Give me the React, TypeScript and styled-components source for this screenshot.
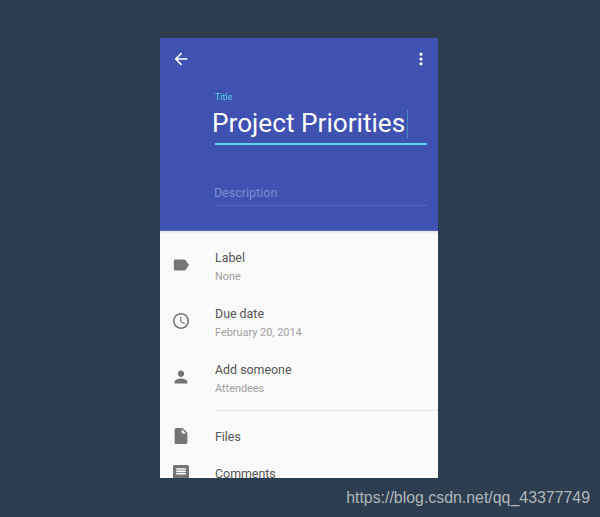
import React from "react";
import styled, { createGlobalStyle } from "styled-components";

const GlobalStyle = createGlobalStyle`
  html, body {
    margin: 0;
    padding: 0;
    background: #2d3e50;
  }
  body {
    font-family: Roboto, "Liberation Sans", sans-serif;
  }
`;

const Page = styled.div`
  width: 600px;
  height: 517px;
  padding-top: 38px;
  box-sizing: border-box;
  overflow: hidden;
  background: #2d3e50;
`;

const Screen = styled.div`
  width: 278px;
  height: 440px;
  margin-left: 160px;
  overflow: hidden;
  background: #fafafa;
`;

const Header = styled.header`
  height: 193px;
  box-sizing: border-box;
  background: #3f51b1;
  border-bottom: 1px solid #5c6bc0;
  box-shadow: 0 1px 2px rgba(0, 0, 0, 0.12);
`;

const Toolbar = styled.div`
  display: flex;
  justify-content: space-between;
  align-items: center;
  padding: 9px 5px 0 9px;
  height: 24px;
`;

const Form = styled.div`
  display: flex;
  flex-direction: column;
  padding: 21px 11px 0 54px;
`;

const TitleLabel = styled.label`
  font-size: 9px;
  line-height: 11px;
  margin-left: 1px;
  color: #4dd0e1;
`;

const TitleRow = styled.div`
  display: flex;
  align-items: center;
  height: 33px;
  margin-top: 4px;
  margin-left: -2px;
`;

const TitleText = styled.span`
  font-size: 26.2px;
  line-height: 33px;
  color: #fff;
  white-space: nowrap;
`;

const Caret = styled.span`
  width: 1px;
  height: 28px;
  margin-left: 2px;
  background: #3f8cc0;
`;

const TitleLine = styled.div`
  height: 2px;
  margin-top: 3px;
  margin-left: 1px;
  background: #5ed5e6;
`;

const Description = styled.div`
  margin-top: 40px;
  font-size: 12.5px;
  line-height: 16px;
  color: #7f8cd0;
  padding-bottom: 4px;
  border-bottom: 1px solid #5565bd;
`;

const List = styled.div`
  padding-top: 6px;
`;

const Row = styled.div<{ $tall?: boolean }>`
  display: flex;
  align-items: center;
  height: ${(p) => (p.$tall ? 56 : 40)}px;
`;

const LastRow = styled(Row)`
  height: 34px;
  align-items: flex-start;
  padding-top: 5px;
`;

const IconSlot = styled.div`
  width: 55px;
  display: flex;
  padding-left: 9px;
  box-sizing: border-box;
  flex-shrink: 0;
`;

const Texts = styled.div`
  display: flex;
  flex-direction: column;
  gap: 4px;
  padding-top: 3px;
`;

const Primary = styled.span`
  font-size: 12.4px;
  line-height: 16px;
  color: #555;
`;

const Secondary = styled.span`
  font-size: 10.9px;
  line-height: 13px;
  color: #a0a0a0;
`;

const FileName = styled(Primary)`
  padding-top: 2px;
`;

const CommentName = styled(Primary)`
  padding-top: 5px;
`;

const Divider = styled.div`
  height: 1px;
  margin: 5px 0 5px 55px;
  background: #e6e6e6;
`;

const Watermark = styled.div`
  margin-top: 11px;
  padding-right: 10px;
  text-align: right;
  font-family: "Liberation Sans", Arial, sans-serif;
  font-size: 15.9px;
  line-height: 18px;
  color: #b0b6bc;
`;

const Icon = styled.svg`
  width: 24px;
  height: 24px;
  fill: #757575;
  display: block;
`;

const WhiteIcon = styled(Icon)`
  fill: #fff;
`;

const scaled = "translate(2.4 2.4) scale(0.8)";

export default function App() {
  return (
    <Page>
      <GlobalStyle />
      <Screen>
        <Header>
          <Toolbar>
            <WhiteIcon viewBox="0 0 24 24">
              <path d="M20 11H7.83l5.59-5.59L12 4l-8 8 8 8 1.41-1.41L7.83 13H20v-2z" transform={scaled} />
            </WhiteIcon>
            <WhiteIcon viewBox="0 0 24 24">
              <path d="M12 8c1.1 0 2-.9 2-2s-.9-2-2-2-2 .9-2 2 .9 2 2 2zm0 2c-1.1 0-2 .9-2 2s.9 2 2 2 2-.9 2-2-.9-2-2-2zm0 6c-1.1 0-2 .9-2 2s.9 2 2 2 2-.9 2-2-.9-2-2-2z" transform={scaled} />
            </WhiteIcon>
          </Toolbar>
          <Form>
            <TitleLabel>Title</TitleLabel>
            <TitleRow>
              <TitleText>Project Priorities</TitleText>
              <Caret />
            </TitleRow>
            <TitleLine />
            <Description>Description</Description>
          </Form>
        </Header>
        <List>
          <Row $tall>
            <IconSlot>
              <Icon viewBox="0 0 24 24">
                <path d="M17.63 5.84C17.27 5.33 16.67 5 16 5L5 5.01C3.9 5.01 3 5.9 3 7v10c0 1.1.9 1.99 2 1.99L16 19c.67 0 1.27-.33 1.63-.84L22 12l-4.37-6.16z" transform={scaled} />
              </Icon>
            </IconSlot>
            <Texts>
              <Primary>Label</Primary>
              <Secondary>None</Secondary>
            </Texts>
          </Row>
          <Row $tall>
            <IconSlot>
              <Icon viewBox="0 0 24 24">
                <path d="M11.99 2C6.47 2 2 6.48 2 12s4.47 10 9.99 10C17.52 22 22 17.52 22 12S17.52 2 11.99 2zM12 20c-4.42 0-8-3.58-8-8s3.58-8 8-8 8 3.58 8 8-3.58 8-8 8zm.5-13H11v6l5.25 3.15.75-1.23-4.5-2.67V7z" transform={scaled} />
              </Icon>
            </IconSlot>
            <Texts>
              <Primary>Due date</Primary>
              <Secondary>February 20, 2014</Secondary>
            </Texts>
          </Row>
          <Row $tall>
            <IconSlot>
              <Icon viewBox="0 0 24 24">
                <path d="M12 12c2.21 0 4-1.79 4-4s-1.79-4-4-4-4 1.79-4 4 1.79 4 4 4zm0 2c-2.67 0-8 1.34-8 4v2h16v-2c0-2.66-5.33-4-8-4z" transform={scaled} />
              </Icon>
            </IconSlot>
            <Texts>
              <Primary>Add someone</Primary>
              <Secondary>Attendees</Secondary>
            </Texts>
          </Row>
          <Divider />
          <Row>
            <IconSlot>
              <Icon viewBox="0 0 24 24">
                <path d="M6 2c-1.1 0-1.99.9-1.99 2L4 20c0 1.1.89 2 1.99 2H18c1.1 0 2-.9 2-2V8l-6-6H6zm7 7V3.5L18.5 9H13z" transform={scaled} />
              </Icon>
            </IconSlot>
            <FileName>Files</FileName>
          </Row>
          <LastRow>
            <IconSlot>
              <Icon viewBox="0 0 24 24">
                <path d="M20 2H4c-1.1 0-2 .9-2 2v16c0 1.1.9 2 2 2h16c1.1 0 2-.9 2-2V4c0-1.1-.9-2-2-2zm-2 12H6v-2h12v2zm0-3H6V9h12v2zm0-3H6V6h12v2z" transform={scaled} />
              </Icon>
            </IconSlot>
            <CommentName>Comments</CommentName>
          </LastRow>
        </List>
      </Screen>
      <Watermark>https://blog.csdn.net/qq_43377749</Watermark>
    </Page>
  );
}
